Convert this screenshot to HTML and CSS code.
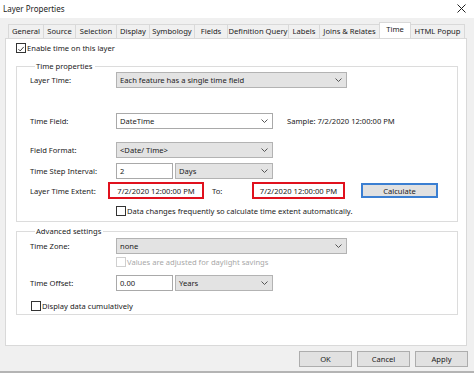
FILE: index.html
```html
<!DOCTYPE html>
<html lang="en">

<head>
    <meta charset="UTF-8">
    <meta name="viewport" content="width=device-width, initial-scale=1.0">
    <title>Layer Properties</title>
    <link rel="stylesheet" href="styles.css">
</head>

<body>

    <div class="dialog">
        <div class="titlebar">
            <span class="title">Layer Properties</span>
            <svg class="close" width="9" height="9" viewBox="0 0 9 9">
                <path d="M0.5 0.5 L8.5 8.5 M8.5 0.5 L0.5 8.5" stroke="#222" stroke-width="1" fill="none" />
            </svg>
        </div>

        <ul class="tabs">
            <li class="tab t-general">General</li>
            <li class="tab t-source">Source</li>
            <li class="tab t-selection">Selection</li>
            <li class="tab t-display">Display</li>
            <li class="tab t-symbology">Symbology</li>
            <li class="tab t-fields">Fields</li>
            <li class="tab t-defq">Definition Query</li>
            <li class="tab t-labels">Labels</li>
            <li class="tab t-joins">Joins &amp; Relates</li>
            <li class="tab t-time active">Time</li>
            <li class="tab t-html">HTML Popup</li>
        </ul>

        <div class="panel">
            <div class="check enable">
                <span class="box">
                    <svg width="10" height="10" viewBox="0 0 10 10">
                        <path d="M1.8 5.2 L4 7.4 L8.4 2.4" stroke="#222" stroke-width="1.1" fill="none" />
                    </svg>
                </span>
                <span>Enable time on this layer</span>
            </div>

            <fieldset class="group group-time">
                <legend>Time properties</legend>

                <div class="row r-layertime">
                    <span class="lbl">Layer Time:</span>
                    <div class="combo grey w-long">
                        <span>Each feature has a single time field</span>
                        <svg class="arrow" width="7" height="4" viewBox="0 0 7 4"><path d="M0.5 0.5 L3.5 3.5 L6.5 0.5" stroke="#555" fill="none" /></svg>
                    </div>
                </div>

                <div class="row r-timefield">
                    <span class="lbl">Time Field:</span>
                    <div class="combo white w-mid">
                        <span>DateTime</span>
                        <svg class="arrow" width="7" height="4" viewBox="0 0 7 4"><path d="M0.5 0.5 L3.5 3.5 L6.5 0.5" stroke="#555" fill="none" /></svg>
                    </div>
                    <span class="sample">Sample: 7/2/2020 12:00:00 PM</span>
                </div>

                <div class="row r-format">
                    <span class="lbl">Field Format:</span>
                    <div class="combo grey w-mid">
                        <span>&lt;Date/ Time&gt;</span>
                        <svg class="arrow" width="7" height="4" viewBox="0 0 7 4"><path d="M0.5 0.5 L3.5 3.5 L6.5 0.5" stroke="#555" fill="none" /></svg>
                    </div>
                </div>

                <div class="row r-step">
                    <span class="lbl">Time Step Interval:</span>
                    <div class="input w-num">2</div>
                    <div class="combo grey w-unit">
                        <span>Days</span>
                        <svg class="arrow" width="7" height="4" viewBox="0 0 7 4"><path d="M0.5 0.5 L3.5 3.5 L6.5 0.5" stroke="#555" fill="none" /></svg>
                    </div>
                </div>

                <div class="row r-extent">
                    <span class="lbl">Layer Time Extent:</span>
                    <div class="input marked first">7/2/2020 12:00:00 PM</div>
                    <span class="to">To:</span>
                    <div class="input marked">7/2/2020 12:00:00 PM</div>
                    <div class="btn calc">Calculate</div>
                </div>

                <div class="row r-auto">
                    <div class="check">
                        <span class="box"></span>
                        <span>Data changes frequently so calculate time extent automatically.</span>
                    </div>
                </div>
            </fieldset>

            <fieldset class="group group-adv">
                <legend>Advanced settings</legend>

                <div class="row r-zone">
                    <span class="lbl">Time Zone:</span>
                    <div class="combo grey w-long">
                        <span>none</span>
                        <svg class="arrow" width="7" height="4" viewBox="0 0 7 4"><path d="M0.5 0.5 L3.5 3.5 L6.5 0.5" stroke="#555" fill="none" /></svg>
                    </div>
                </div>

                <div class="row r-dst">
                    <div class="check disabled">
                        <span class="box"></span>
                        <span>Values are adjusted for daylight savings</span>
                    </div>
                </div>

                <div class="row r-offset">
                    <span class="lbl">Time Offset:</span>
                    <div class="input w-num">0.00</div>
                    <div class="combo grey w-unit">
                        <span>Years</span>
                        <svg class="arrow" width="7" height="4" viewBox="0 0 7 4"><path d="M0.5 0.5 L3.5 3.5 L6.5 0.5" stroke="#555" fill="none" /></svg>
                    </div>
                </div>

                <div class="row r-cumul">
                    <div class="check">
                        <span class="box"></span>
                        <span>Display data cumulatively</span>
                    </div>
                </div>
            </fieldset>
        </div>

        <div class="buttons">
            <div class="btn">OK</div>
            <div class="btn">Cancel</div>
            <div class="btn">Apply</div>
        </div>
    </div>

</body>

</html>
```

FILE: styles.css
```css
* {
    padding: 0px;
    margin: 0px;
    list-style: none;
    box-sizing: border-box;
}

body {
    background: #fff;
    font-family: "Noto Sans", "Open Sans", sans-serif;
    font-size: 7.6px;
    color: #222;
}

.dialog {
    width: 474px;
    height: 373px;
    background: #f0f0f0;
    border-bottom: 2px solid #b4b4b4;
}

.titlebar {
    height: 18px;
    background: #fff;
    display: flex;
    justify-content: space-between;
    align-items: center;
    padding: 0 8px 2px 3px;
}

.title {
    font-size: 8px;
    color: #222;
}

/* tabs */
.tabs {
    display: flex;
    align-items: flex-end;
    height: 20px;
    padding-left: 8px;
}

.tab {
    height: 14px;
    line-height: 13px;
    border: 1px solid #d9d9d9;
    border-bottom: none;
    border-right: none;
    background: #f0f0f0;
    text-align: center;
    color: #222;
}

.tab.active {
    height: 16px;
    background: #fff;
    line-height: 12px;
    border-right: 1px solid #d9d9d9;
}

.tab.active + .tab {
    border-left: none;
}

.tab:last-child {
    border-right: 1px solid #d9d9d9;
}

.t-general { width: 35px; }
.t-source { width: 32px; }
.t-selection { width: 41px; }
.t-display { width: 33px; }
.t-symbology { width: 45px; }
.t-fields { width: 33px; }
.t-defq { width: 61px; }
.t-labels { width: 31px; }
.t-joins { width: 60px; }
.t-time { width: 32px; }
.t-html { width: 54px; }

/* tab page */
.panel {
    margin: 0 7px 0 5px;
    height: 308px;
    background: #fff;
    border: 1px solid #d9d9d9;
    padding: 4px 8px 0 10px;
}

.check {
    display: flex;
    align-items: center;
    height: 10px;
    gap: 1px;
}

.box {
    width: 10px;
    height: 10px;
    border: 1px solid #333;
    background: #fff;
    display: flex;
}

.check.disabled {
    color: #a8a8a8;
}

.check.disabled .box {
    border-color: #cfcfcf;
}

.group {
    border: 1px solid #dcdcdc;
    padding: 1px 0 5px 13px;
}

.group legend {
    margin-left: 5px;
    padding: 0 2px 0 1px;
    line-height: 10px;
    height: 10px;
    color: #222;
}

.group-time {
    margin-top: 8px;
}

.group-adv {
    margin-top: 4px;
    padding-top: 2px;
    padding-bottom: 3px;
}

.row {
    display: flex;
    align-items: center;
    height: 16px;
}

.lbl {
    width: 86px;
    flex-shrink: 0;
    color: #222;
}

.combo,
.input {
    height: 16px;
    display: flex;
    align-items: center;
    padding-left: 3px;
    white-space: nowrap;
}

.combo {
    justify-content: space-between;
    padding-right: 4px;
}

.combo.grey {
    background: #e3e3e3;
    border: 1px solid #b3b3b3;
}

.combo.white {
    background: #fff;
    border: 1px solid #a9a9a9;
}

.input {
    background: #fff;
    border: 1px solid #a9a9a9;
}

.w-long { width: 231px; }
.w-mid { width: 157px; }
.w-num { width: 57px; }
.w-unit { width: 98px; margin-left: 2px; }

.sample {
    margin-left: 14px;
    color: #222;
}

.r-layertime { margin-top: 0; }
.r-timefield { margin-top: 25px; }
.r-format { margin-top: 13px; }
.r-step { margin-top: 5px; }

.r-extent {
    margin-top: 3px;
    height: 17px;
}

.marked {
    height: 17px;
    width: 93px;
    border: 2px solid #e0111d;
    justify-content: center;
    padding-left: 0;
}

.marked.first {
    width: 96px;
    margin-left: -8px;
}

.to {
    margin-left: 8px;
    width: 40px;
}

.btn {
    width: 53px;
    height: 16px;
    background: #e1e1e1;
    border: 1px solid #adadad;
    display: flex;
    align-items: center;
    justify-content: center;
    color: #222;
}

.calc {
    width: 77px;
    height: 15px;
    margin-left: 16px;
    border: 2px solid #3b7fd2;
}

.r-auto {
    margin-top: 7px;
    height: 10px;
    padding-left: 86px;
}

.r-zone { margin-top: 0; }

.r-dst {
    margin-top: 3px;
    height: 10px;
    padding-left: 86px;
}

.r-offset { margin-top: 8px; }

.r-cumul {
    margin-top: 10px;
    height: 10px;
    padding-left: 1px;
}

.buttons {
    display: flex;
    justify-content: flex-end;
    gap: 5px;
    padding: 5px 6px 0 0;
}
```
